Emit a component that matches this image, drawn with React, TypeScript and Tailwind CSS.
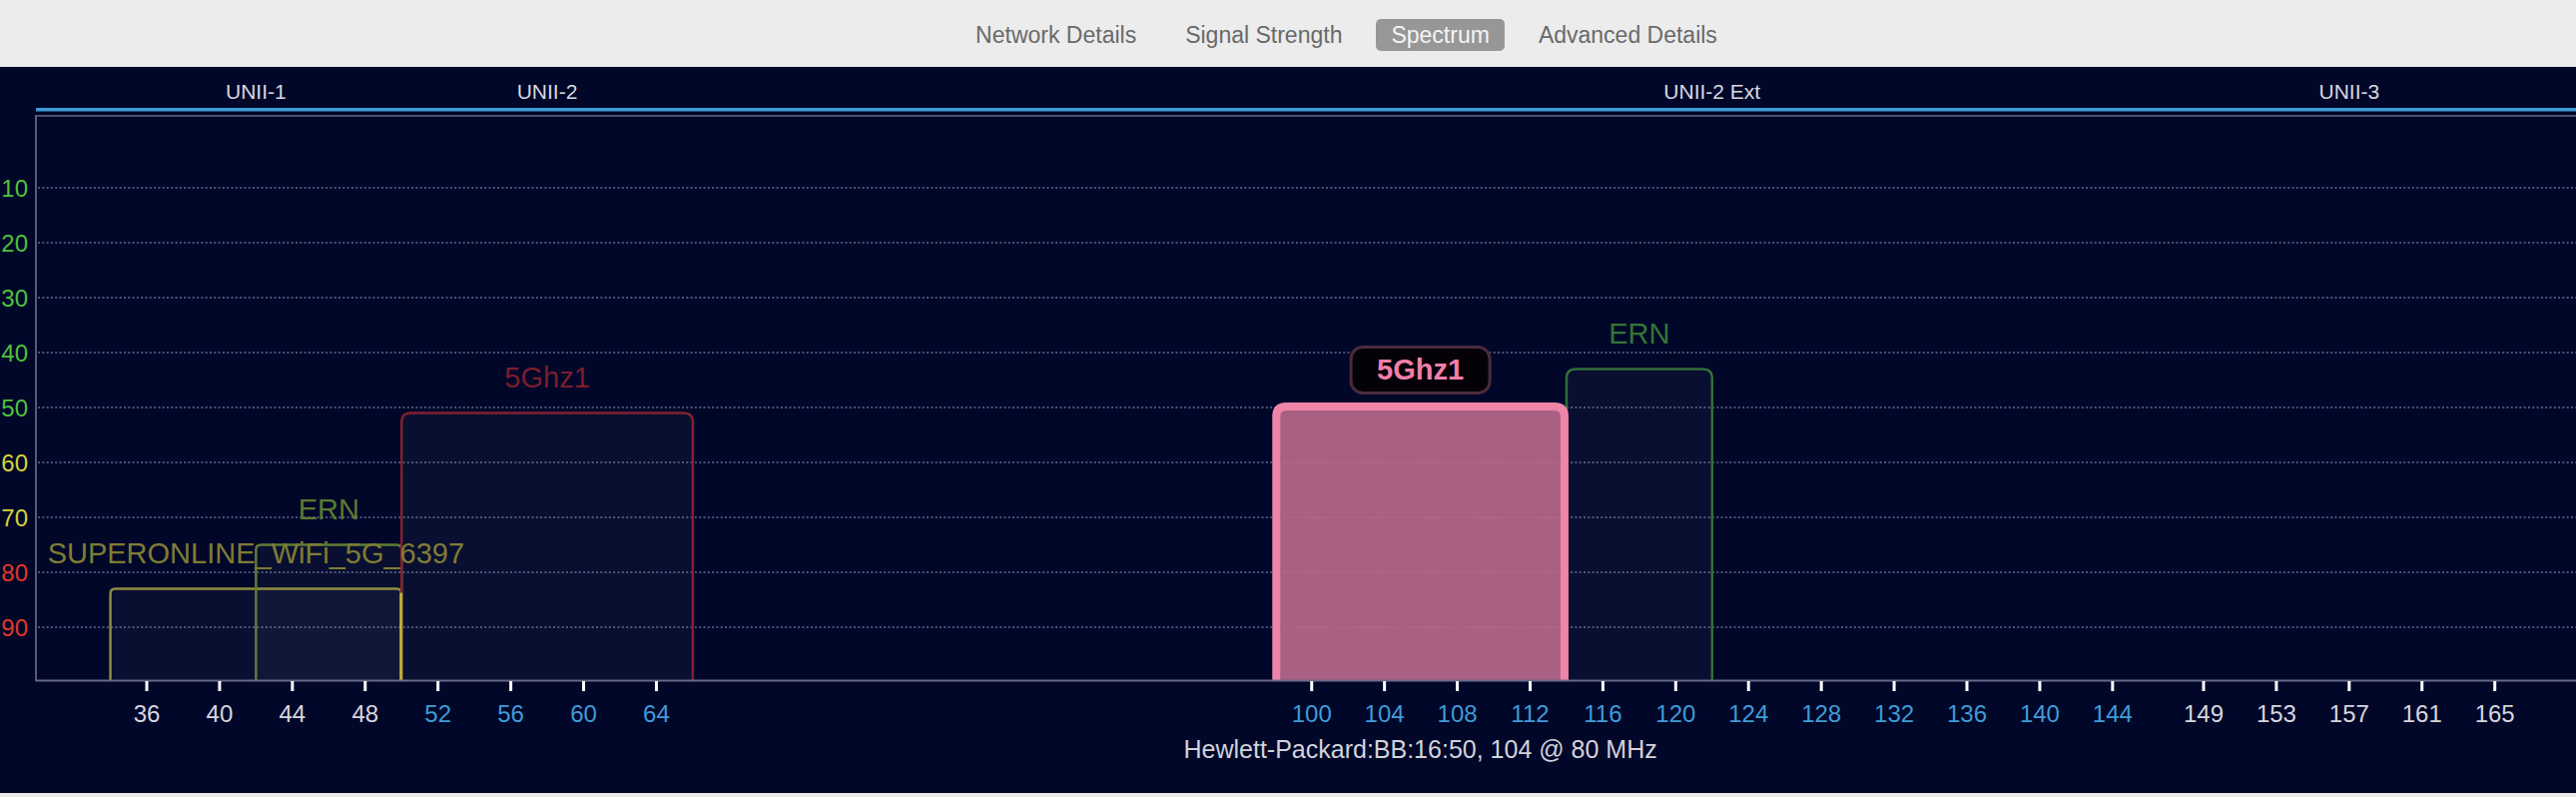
import React from "react";

const X = (ch: number) => 147 + (ch - 36) * 18.23;
const Y = (dbm: number) => 133 + 5.5 * dbm;
const AXIS = 681.5;

const tabs = ["Network Details", "Signal Strength", "Spectrum", "Advanced Details"];

const bands = [
  { name: "UNII-1", ch: 42 },
  { name: "UNII-2", ch: 58 },
  { name: "UNII-2 Ext", ch: 122 },
  { name: "UNII-3", ch: 157 },
];

const channels = [
  36, 40, 44, 48, 52, 56, 60, 64, 100, 104, 108, 112, 116, 120, 124, 128, 132, 136, 140, 144, 149,
  153, 157, 161, 165,
];

const chColor = (ch: number) => (ch <= 48 || ch >= 149 ? "#d6d6de" : "#3f9bd8");

const levelColor = (v: number) => (v <= 50 ? "#4fc23c" : v <= 70 ? "#d6d23a" : "#e0382a");

const networks = [
  { name: "SUPERONLINE_WiFi_5G_6397", from: 34, to: 50, level: 83, stroke: "#8e8b3b", text: "#7f7c34", r: 5 },
  { name: "ERN", from: 42, to: 50, level: 75, stroke: "#5d7d33", text: "#5b7b2f", r: 5 },
  { name: "5Ghz1", from: 50, to: 66, level: 51, stroke: "#82202f", text: "#7c1d2d", r: 9 },
  { name: "ERN", from: 114, to: 122, level: 43, stroke: "#326f37", text: "#357436", r: 9 },
];

function shape(x1: number, x2: number, top: number, r: number) {
  return `M${x1} ${AXIS} L${x1} ${top + r} Q${x1} ${top} ${x1 + r} ${top} L${x2 - r} ${top} Q${x2} ${top} ${x2} ${top + r} L${x2} ${AXIS}`;
}

function Spectrum() {
  const sel = { x1: X(98) + 1, x2: X(114) - 2, top: 407 };
  const selMid = (sel.x1 + sel.x2) / 2;
  return (
    <svg width={2580} height={727} viewBox="0 67 2580 727" className="block font-['Liberation_Sans',Arial,sans-serif]">
      {/* band header */}
      {bands.map((b) => (
        <text key={b.name} x={X(b.ch)} y={99} fontSize={21} fill="#d8d8e0" textAnchor="middle">
          {b.name}
        </text>
      ))}
      <rect x={36} y={108} width={2544} height={3.5} fill="#3d9ad8" />
      <rect x={36} y={115} width={2544} height={2} fill="#4a4f6e" />
      <rect x={35} y={115} width={2} height={567} fill="#5a5a78" />

      {/* grid */}
      {[10, 20, 30, 40, 50, 60, 70, 80, 90].map((v) => (
        <g key={v}>
          <line x1={38} x2={2580} y1={Y(v)} y2={Y(v)} stroke="#4a5276" strokeWidth={2} strokeDasharray="2 2.3" />
          <text x={28} y={Y(v) + 9} fontSize={24} fill={levelColor(v)} textAnchor="end">
            {v}
          </text>
        </g>
      ))}

      {/* networks */}
      {networks.map((n, i) => (
        <path
          key={i}
          d={shape(X(n.from), X(n.to), Y(n.level), n.r)}
          fill="#ffffff"
          fillOpacity={0.035}
          stroke={n.stroke}
          strokeWidth={2.5}
        />
      ))}
      <line x1={401.5} x2={401.5} y1={Y(83) + 4} y2={AXIS} stroke="#c4c03e" strokeWidth={2.5} />

      <path
        d={shape(sel.x1, sel.x2, sel.top, 10)}
        fill="#bb6c8d"
        fillOpacity={0.9}
        stroke="#ee85a9"
        strokeWidth={8}
      />

      {/* axis */}
      <rect x={36} y={680.5} width={2544} height={2} fill="#6a6a88" />
      {channels.map((ch) => (
        <g key={ch}>
          <rect x={X(ch) - 1.5} y={682} width={3} height={10} fill="#ffffff" />
          <text x={X(ch)} y={722.5} fontSize={24} fill={chColor(ch)} textAnchor="middle">
            {ch}
          </text>
        </g>
      ))}

      {/* labels */}
      {networks.map((n, i) => (
        <text
          key={i}
          x={(X(n.from) + X(n.to)) / 2}
          y={Y(n.level) - 26}
          fontSize={29}
          fill={n.text}
          textAnchor="middle"
        >
          {n.name}
        </text>
      ))}

      <rect x={selMid - 69.5} y={347.5} width={139} height={46} rx={12} fill="#040208" stroke="#4b2a3d" strokeWidth={3} />
      <text x={selMid} y={380} fontSize={29} fontWeight={700} fill="#f27fa8" textAnchor="middle">
        5Ghz1
      </text>

      <text x={selMid} y={759} fontSize={25} fill="#d2d2da" textAnchor="middle">
        Hewlett-Packard:BB:16:50, 104 @ 80 MHz
      </text>
    </svg>
  );
}

export default function App() {
  return (
    <div className="w-[2580px] h-[798px] bg-[#ececec] flex flex-col overflow-hidden font-['Liberation_Sans',Arial,sans-serif]">
      <div className="h-[67px] shrink-0 flex items-center justify-center gap-[19px] pl-[117px] pt-[3px]">
        {tabs.map((t) => (
          <div
            key={t}
            className={
              t === "Spectrum"
                ? "h-[32px] px-[15px] rounded-[5px] flex items-center text-[23px] leading-none bg-[#979797] text-[#f5f5f5]"
                : "h-[32px] px-[15px] rounded-[5px] flex items-center text-[23px] leading-none text-[#696969]"
            }
          >
            {t}
          </div>
        ))}
      </div>
      <div className="h-[727px] shrink-0 bg-[#000729]">
        <Spectrum />
      </div>
    </div>
  );
}
